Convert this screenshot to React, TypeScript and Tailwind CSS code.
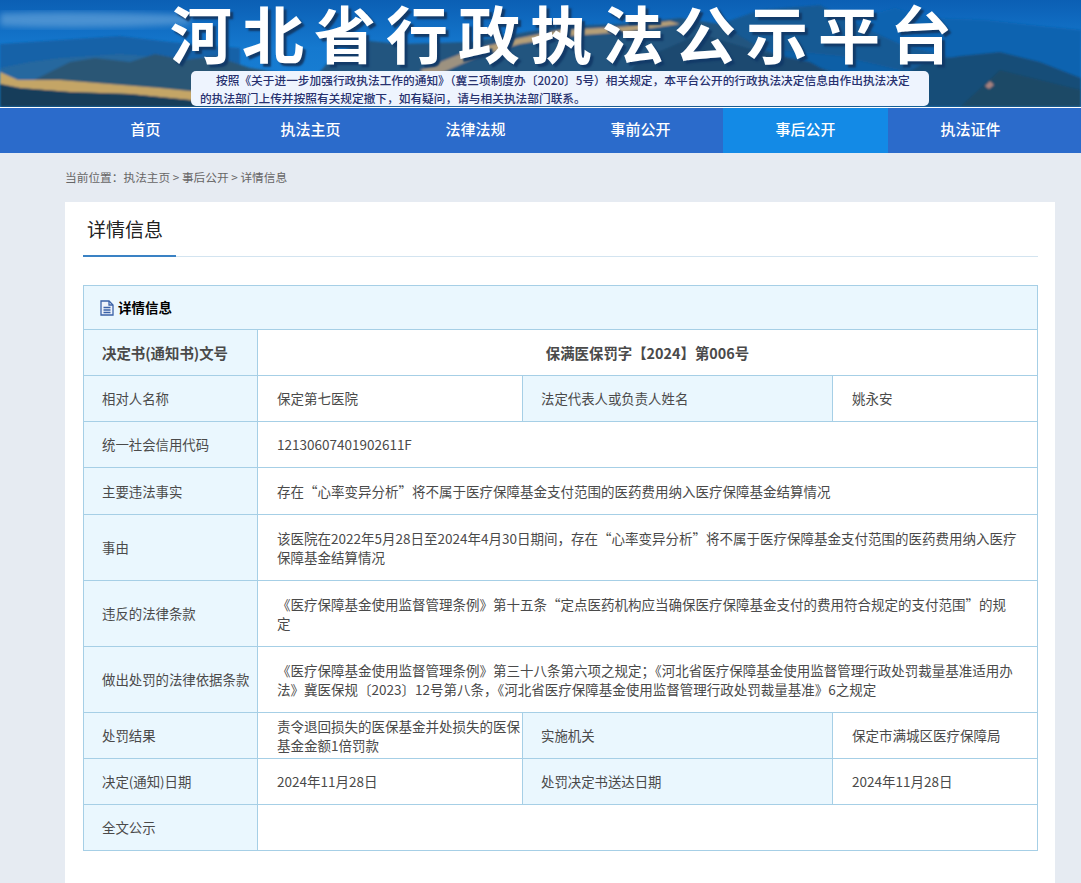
const font = { fontFamily: '"Noto Sans CJK SC", "Liberation Sans", sans-serif' };

function Banner() {
  return (
    <div className="relative h-[107px] overflow-hidden bg-[#1667b5]">
      <svg className="absolute inset-0" width="1081" height="107" viewBox="0 0 1081 107">
        <defs>
          <linearGradient id="sky" x1="0" y1="0" x2="0" y2="1">
            <stop offset="0" stopColor="#0b5fb4" />
            <stop offset="0.45" stopColor="#1579cf" />
            <stop offset="1" stopColor="#1a82d6" />
          </linearGradient>
          <filter id="soft"><feGaussianBlur stdDeviation="1.2" /></filter>
          <filter id="haze"><feGaussianBlur stdDeviation="3" /></filter>
        </defs>
        <rect width="1081" height="107" fill="url(#sky)" />
        <path d="M0 13 Q80 10 190 15 L190 24 Q90 30 0 26Z" fill="#5f9fd8" opacity=".75" filter="url(#haze)" />
        <g filter="url(#soft)">
          <path d="M0 44 L60 40 L120 36 L170 42 L240 48 V107 H0Z" fill="#1462a8" />
          <path d="M0 68 L30 62 L60 58 L120 54 L200 60 L260 70 V107 H0Z" fill="#25689f" />
          <path d="M810 30 L860 18 L895 8 L930 18 L985 20 L1040 26 L1081 30 V107 H810Z" fill="#0f63b0" />
          <path d="M720 24 L760 10 L820 5 L860 26 L900 44 L960 60 V107 H720Z" fill="#175a94" />
          <path d="M700 44 L780 50 L840 56 L900 70 V107 H700Z" fill="#0e5ea6" />
          <path d="M30 82 L70 62 L95 58 L130 62 L155 54 L185 60 L215 56 L250 68 L300 76 V107 H30Z" fill="#2b5675" />
          <path d="M290 107 L330 60 L360 40 L400 44 L470 42 L560 26 L620 24 L680 18 L720 24 L760 48 L800 62 L860 80 L900 107Z" fill="#21557f" />
          <path d="M640 60 L700 34 L760 52 L810 62 L860 90 L860 107 L600 107Z" fill="#1a4a70" />
          <path d="M890 84 L925 62 L960 56 L1000 52 L1040 62 L1081 78 V107 H890Z" fill="#164d78" />
          <path d="M1000 70 L1081 90 V107 H960Z" fill="#1b4a66" />
          <path d="M0 72 L18 80 L60 80 L110 84 L160 88 L200 92 L250 94 L250 100 L190 100 L130 94 L70 92 L20 88 L0 84Z" fill="#c4a566" />
          <path d="M0 84 L20 88 L70 92 L130 94 L190 100 L300 107 H0Z" fill="#163e5a" />
          <path d="M470 50 L520 38 L560 30 L620 27 L670 21 L680 24 L625 32 L570 36 L520 44 L480 56Z" fill="#b59f78" />
          <path d="M420 70 L470 50 L480 56 L430 78Z" fill="#9d9280" />
          <path d="M985 86 L990 81 L994 85 L989 89Z" fill="#a8827f" />
        </g>
      </svg>
      <div className="relative h-[68px] whitespace-nowrap pl-[170px] text-[62px] leading-[64px] font-bold tracking-[10px] text-white [text-shadow:3px_3px_2px_#123a68]">
        河北省行政执法公示平台
      </div>
      <div className="absolute top-[71px] left-[191px] h-[35px] w-[738px] rounded-[5px] bg-[#eef4fe] pl-[9px] pr-[11px] text-[11.7px] leading-[17.5px] text-[#27316f]">
        <p className="indent-[16px] font-medium">按照《关于进一步加强行政执法工作的通知》（冀三项制度办〔2020〕5号）相关规定，本平台公开的行政执法决定信息由作出执法决定的执法部门上传并按照有关规定撤下，如有疑问，请与相关执法部门联系。</p>
      </div>
    </div>
  );
}

const navItems = ["首页", "执法主页", "法律法规", "事前公开", "事后公开", "执法证件"];

function Nav() {
  return (
    <nav className="flex h-[46px] justify-end border-t border-white bg-[#2b6bcb] pr-[28px]">
      {navItems.map((item) => (
        <a key={item} className={`flex w-[165px] items-center justify-center pb-[2px] text-[15px] font-medium text-white ${item === "事后公开" ? "bg-[#138ae6]" : ""}`}>
          {item}
        </a>
      ))}
    </nav>
  );
}

const label = "border border-[#a6cfe6] bg-[#eaf7fe] pl-[18px] pr-1 text-[13.4px] text-[#4a4a4a]";
const value = "border border-[#a6cfe6] pl-[19px] text-[13.5px] leading-[19px] text-[#4a4a4a]";

function DetailTable() {
  return (
    <table className="w-[954px] table-fixed border-collapse">
      <colgroup>
        <col className="w-[174px]" />
        <col className="w-[265px]" />
        <col className="w-[310px]" />
        <col className="w-[205px]" />
      </colgroup>
      <tbody>
        <tr className="h-[44px]">
          <td colSpan={4} className="border border-[#a6cfe6] bg-[#eaf7fe] pl-4">
            <div className="flex items-center gap-[4px] text-[13.5px] font-bold text-black">
              <svg width="14" height="16" viewBox="0 0 14 16" fill="none" stroke="#3a62a8" strokeWidth="1.3">
                <path d="M1 1h8l4 4v10H1z" fill="#eef3fb" />
                <path d="M9 1v4h4M3.5 7.5h7M3.5 10h7M3.5 12.5h7" />
              </svg>
              详情信息
            </div>
          </td>
        </tr>
        <tr className="h-[46px]">
          <td className={`${label} text-[14.4px] font-bold`}>决定书(通知书)文号</td>
          <td colSpan={3} className="border border-[#a6cfe6] text-center text-[14.4px] font-bold text-[#4a4a4a]">保满医保罚字【2024】第006号</td>
        </tr>
        <tr className="h-[46px]">
          <td className={label}>相对人名称</td>
          <td className={value}>保定第七医院</td>
          <td className={label}>法定代表人或负责人姓名</td>
          <td className={value}>姚永安</td>
        </tr>
        <tr className="h-[46px]">
          <td className={label}>统一社会信用代码</td>
          <td colSpan={3} className={value}>12130607401902611F</td>
        </tr>
        <tr className="h-[47px]">
          <td className={label}>主要违法事实</td>
          <td colSpan={3} className={value}>存在“心率变异分析”将不属于医疗保障基金支付范围的医药费用纳入医疗保障基金结算情况</td>
        </tr>
        <tr className="h-[66px]">
          <td className={label}>事由</td>
          <td colSpan={3} className={`${value} pr-[19px]`}>该医院在2022年5月28日至2024年4月30日期间，存在“心率变异分析”将不属于医疗保障基金支付范围的医药费用纳入医疗保障基金结算情况</td>
        </tr>
        <tr className="h-[66px]">
          <td className={label}>违反的法律条款</td>
          <td colSpan={3} className={`${value} pr-[19px]`}>《医疗保障基金使用监督管理条例》第十五条“定点医药机构应当确保医疗保障基金支付的费用符合规定的支付范围”的规定</td>
        </tr>
        <tr className="h-[66px]">
          <td className={label}>做出处罚的法律依据条款</td>
          <td colSpan={3} className={`${value} pr-[19px]`}>《医疗保障基金使用监督管理条例》第三十八条第六项之规定；《河北省医疗保障基金使用监督管理行政处罚裁量基准适用办法》冀医保规〔2023〕12号第八条，《河北省医疗保障基金使用监督管理行政处罚裁量基准》6之规定</td>
        </tr>
        <tr className="h-[46px]">
          <td className={label}>处罚结果</td>
          <td className={value}>责令退回损失的医保基金并处损失的医保基金金额1倍罚款</td>
          <td className={label}>实施机关</td>
          <td className={value}>保定市满城区医疗保障局</td>
        </tr>
        <tr className="h-[46px]">
          <td className={label}>决定(通知)日期</td>
          <td className={value}>2024年11月28日</td>
          <td className={label}>处罚决定书送达日期</td>
          <td className={value}>2024年11月28日</td>
        </tr>
        <tr className="h-[46px]">
          <td className={label}>全文公示</td>
          <td colSpan={3} className={value}></td>
        </tr>
      </tbody>
    </table>
  );
}

export default function App() {
  return (
    <div className="min-h-[883px] overflow-hidden bg-[#e6ebf2]" style={font}>
      <Banner />
      <Nav />
      <div className="px-[65px] pt-[16px] text-[11.7px] leading-[16px] text-[#666]">当前位置：执法主页 &gt; 事后公开 &gt; 详情信息</div>
      <div className="mx-[65px] mt-[17px] w-[990px] bg-white pl-[18px] pr-[17px] pb-[40px]">
        <div className="h-[55px] border-b border-[#d3e4f0]">
          <h2 className="h-[55px] w-[93px] border-b-2 border-[#3a82c4] pl-[4px] pt-[13px] text-[19px] leading-[28px] font-normal text-[#222]">详情信息</h2>
        </div>
        <div className="pt-[28px]">
          <DetailTable />
        </div>
      </div>
    </div>
  );
}
